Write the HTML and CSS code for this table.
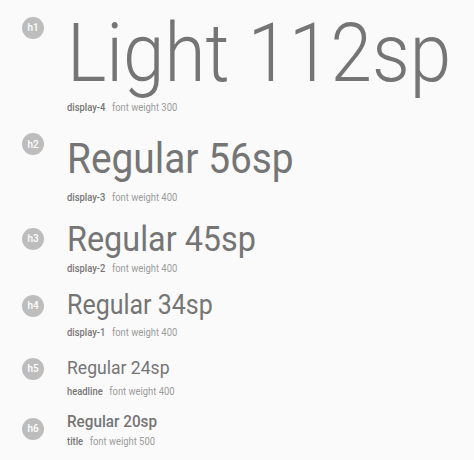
FILE: index.html
```html
<!DOCTYPE html>
<html lang="en">
<head>
<meta charset="utf-8">
<title>Typography scale</title>
<link rel="stylesheet" href="styles.css">
</head>
<body>
<main class="scale">
  <section class="row r1">
    <span class="badge">h1</span>
    <div class="body">
      <div class="sample s1">Light 112sp</div>
      <div class="meta"><span class="style">display-4</span><span class="weight">font weight 300</span></div>
    </div>
  </section>
  <section class="row r2">
    <span class="badge">h2</span>
    <div class="body">
      <div class="sample s2">Regular 56sp</div>
      <div class="meta"><span class="style">display-3</span><span class="weight">font weight 400</span></div>
    </div>
  </section>
  <section class="row r3">
    <span class="badge">h3</span>
    <div class="body">
      <div class="sample s3">Regular 45sp</div>
      <div class="meta"><span class="style">display-2</span><span class="weight">font weight 400</span></div>
    </div>
  </section>
  <section class="row r4">
    <span class="badge">h4</span>
    <div class="body">
      <div class="sample s4">Regular 34sp</div>
      <div class="meta"><span class="style">display-1</span><span class="weight">font weight 400</span></div>
    </div>
  </section>
  <section class="row r5">
    <span class="badge">h5</span>
    <div class="body">
      <div class="sample s5">Regular 24sp</div>
      <div class="meta"><span class="style">headline</span><span class="weight">font weight 400</span></div>
    </div>
  </section>
  <section class="row r6">
    <span class="badge">h6</span>
    <div class="body">
      <div class="sample s6">Regular 20sp</div>
      <div class="meta"><span class="style">title</span><span class="weight">font weight 500</span></div>
    </div>
  </section>
</main>
</body>
</html>
```

FILE: styles.css
```css
html, body {
  margin: 0;
  padding: 0;
  background: #fafafa;
}
body {
  font-family: Roboto, "Noto Sans", sans-serif;
  color: #757575;
  width: 474px;
  height: 460px;
  overflow: hidden;
}
.scale {
  display: flex;
  flex-direction: column;
  padding-left: 22px;
}
.row {
  display: flex;
  align-items: flex-start;
}
.badge {
  flex: none;
  width: 22px;
  height: 22px;
  border-radius: 50%;
  background: #bdbdbd;
  color: #fff;
  font-size: 10px;
  font-weight: 500;
  display: flex;
  align-items: center;
  justify-content: center;
  margin-right: 23px;
  margin-top: var(--badge, 0px);
}
.body {
  display: flex;
  flex-direction: column;
  align-items: flex-start;
}
.sample {
  line-height: 1;
  color: #757575;
  white-space: nowrap;
  transform: scaleX(var(--sx, 0.925));
  transform-origin: left top;
}
.meta {
  font-size: 10px;
  line-height: 12px;
  display: flex;
  gap: 7px;
  white-space: nowrap;
  margin-top: var(--meta, 6px);
  transform: scaleX(0.94);
  transform-origin: left top;
}
.meta .style {
  font-weight: 500;
  color: #767676;
}
.meta .weight {
  color: #9a9a9a;
}

.s1 { font-size: 82px; font-weight: 300; --sx: 0.91; }
.s2 { font-size: 42px; }
.s3 { font-size: 35px; }
.s4 { font-size: 27px; }
.s5 { font-size: 19px; }
.s6 { font-size: 16.5px; font-weight: 500; }

.r1 { margin-top: 12px; --badge: 4.5px; --meta: 8px; }
.r2 { margin-top: 23.6px; --badge: -4.6px; --meta: 12.4px; }
.r3 { margin-top: 18.5px; --badge: 5.5px; --meta: 5.5px; }
.r4 { margin-top: 17.3px; --badge: 2.7px; --meta: 7.7px; }
.r5 { margin-top: 19px; --badge: 0px; --meta: 9px; }
.r6 { margin-top: 16.5px; --badge: 3.5px; --meta: 5px; }
```
